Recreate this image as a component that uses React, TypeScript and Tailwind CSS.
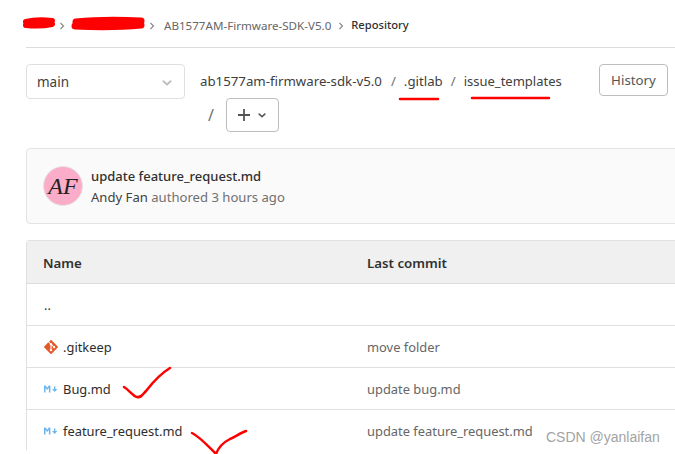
const font = { fontFamily: '"Noto Sans", "Open Sans", sans-serif' };

function Chevron({ className }: { className?: string }) {
  return (
    <svg viewBox="0 0 10 6" className={className} fill="none" stroke="currentColor" strokeWidth="2" strokeLinecap="round" strokeLinejoin="round">
      <path d="M1.5 1.2 5 4.6 8.5 1.2" />
    </svg>
  );
}

function Sep() {
  return (
    <svg viewBox="0 0 6 8" className="h-2 w-[6px] text-[#8a8a8a]" fill="none" stroke="currentColor" strokeWidth="1.2">
      <path d="M1.5 1 4.5 4 1.5 7" />
    </svg>
  );
}

function MdIcon() {
  return (
    <svg viewBox="0 0 14 8" className="h-2 w-[14px] shrink-0 text-[#6cb6f0]" fill="currentColor">
      <path d="M0 7.5V.5h1.6l1.6 2.2L4.8.5h1.6v7H4.9V3L3.2 5.1 1.5 3v4.5z" />
      <path d="M10 1.5h1.4v2.4h2L10.7 7 8 3.9h2z" />
    </svg>
  );
}

function GitIcon() {
  return (
    <svg viewBox="0 0 16 16" className="h-[14px] w-[14px] shrink-0 text-[#e4592b]" fill="currentColor">
      <path fillRule="evenodd" d="M15.7 7.3 8.7.3a1 1 0 0 0-1.4 0L5.8 1.8l1.8 1.8a1.3 1.3 0 0 1 1.7 1.6l1.8 1.8a1.3 1.3 0 1 1-.8.8L8.6 6.1v4.3a1.3 1.3 0 1 1-1.2 0V6a1.3 1.3 0 0 1-.7-1.7L4.9 2.6.3 7.3a1 1 0 0 0 0 1.4l7 7a1 1 0 0 0 1.4 0l7-7a1 1 0 0 0 0-1.4z" />
    </svg>
  );
}

function Row({ icon, name, commit }: { icon?: React.ReactNode; name: string; commit?: string }) {
  return (
    <div className="flex h-[42px] items-center border-b border-[#e0e0e0] pt-[2px] text-[12.9px]">
      <div className="flex w-[340px] items-center gap-[5px] pl-[17px] text-[#2e2e2e]">
        {icon}
        <span>{name}</span>
      </div>
      <div className="text-[#666666]">{commit}</div>
    </div>
  );
}

export default function App() {
  return (
    <div style={font} className="relative h-[454px] w-[675px] overflow-hidden bg-white text-[#303030]">
      <div className="h-[450px] overflow-hidden pl-[26px]">
        {/* breadcrumbs */}
        <div className="flex h-[48px] items-center border-b border-[#dcdcdc] pt-[4px] text-[11.6px]">
          <div className="w-[33px]" />
          <Sep />
          <div className="w-[84px]" />
          <Sep />
          <span className="ml-[9px] text-[#666666]">AB1577AM-Firmware-SDK-V5.0</span>
          <span className="ml-[7px]"><Sep /></span>
          <span className="ml-[7px] text-[11.2px] font-medium text-[#303030]">Repository</span>
        </div>

        {/* toolbar */}
        <div className="mt-[16px] flex h-[68px] items-start">
          <div className="flex h-[35px] w-[159px] items-center justify-between rounded border border-[#dfdfdf] pl-[10px] pr-[12px] pt-[2px] text-[13.5px] text-[#404040]">
            <span>main</span>
            <Chevron className="h-[6px] w-[10px] text-[#bfbfbf]" />
          </div>
          <div className="ml-[15px] w-[399px]">
            <div className="flex h-[34px] items-center pt-[2px] text-[13.25px] text-[#404040]">
              <span>ab1577am-firmware-sdk-v5.0</span>
              <span className="ml-[9px] text-[#707070]">/</span>
              <span className="ml-[8px]">.gitlab</span>
              <span className="ml-[8px] text-[#707070]">/</span>
              <span className="ml-[8px] text-[13px]">issue_templates</span>
            </div>
            <div className="flex h-[34px] items-center pl-[8px]">
              <span className="text-[#707070]">/</span>
              <div className="ml-[12px] flex h-[34px] w-[53px] items-center justify-center gap-[8px] rounded border border-[#bdbdbd] text-[#555555]">
                <svg viewBox="0 0 12 12" className="h-3 w-3" stroke="currentColor" strokeWidth="1.8"><path d="M6 0v12M0 6h12" /></svg>
                <Chevron className="h-[5px] w-[8px]" />
              </div>
            </div>
          </div>
          <div className="flex h-[32px] w-[69px] items-center justify-center rounded border border-[#bdbdbd] pt-[2px] text-[13.3px] text-[#555555]">
            History
          </div>
        </div>

        {/* commit */}
        <div className="mt-[16px] flex h-[76px] w-[700px] items-center gap-[7px] rounded border border-[#e3e3e3] bg-[#fafafa] pl-[16px]">
          <div className="flex h-[40px] w-[40px] items-center justify-center rounded-full border border-[#e6e6e6] bg-[#fbacc8] text-[24px] italic text-[#222222]" style={{ fontFamily: '"Liberation Serif", serif' }}>
            AF
          </div>
          <div className="pl-[1px] pt-[2px] leading-[21px]">
            <div className="text-[13px] font-medium text-[#303030]">update feature_request.md</div>
            <div className="text-[13.1px] text-[#707070]"><span className="text-[#404040]">Andy Fan</span> authored 3 hours ago</div>
          </div>
        </div>

        {/* table */}
        <div className="mt-[16px] w-[700px] rounded-t border-x border-t border-[#e0e0e0]">
          <div className="flex h-[43px] items-center border-b border-[#dcdcdc] bg-[#f0f0f0] pt-[3px] text-[13.3px] font-semibold text-[#303030]">
            <div className="w-[340px] pl-[16px]">Name</div>
            <div>Last commit</div>
          </div>
          <Row name=".." />
          <Row icon={<GitIcon />} name=".gitkeep" commit="move folder" />
          <Row icon={<MdIcon />} name="Bug.md" commit="update bug.md" />
          <Row icon={<MdIcon />} name="feature_request.md" commit="update feature_request.md" />
        </div>
      </div>

      {/* hand-drawn annotations */}
      <svg className="absolute left-0 top-0 h-[454px] w-[675px]" viewBox="0 0 675 454" fill="none" stroke="#fe0000" strokeLinecap="round" strokeLinejoin="round">
        <path d="M26 22c8-2 17-2 26-1M26 25c9 1 17 1 26-1" strokeWidth="6" />
        <path d="M76 22c20-2 44-2 65-1M75 26c22 1 45 1 66-1" strokeWidth="7" />
        <path d="M400 99h38M472 98h77" strokeWidth="2.5" />
        <path d="M124 387c5 3 9 9 13 10s5-2 9-6c7-9 14-17 24-23" strokeWidth="2.5" />
        <path d="M192 433c8 4 15 12 24 21 3-8 8-12 14-15 5-2 10-6 16-8" strokeWidth="2.5" />
      </svg>

      {/* watermark */}
      <div className="absolute left-[546px] top-[427px] text-[14px] text-[#a3a3a3]" style={{ fontFamily: '"Liberation Sans", sans-serif' }}>
        CSDN @yanlaifan
      </div>
    </div>
  );
}
